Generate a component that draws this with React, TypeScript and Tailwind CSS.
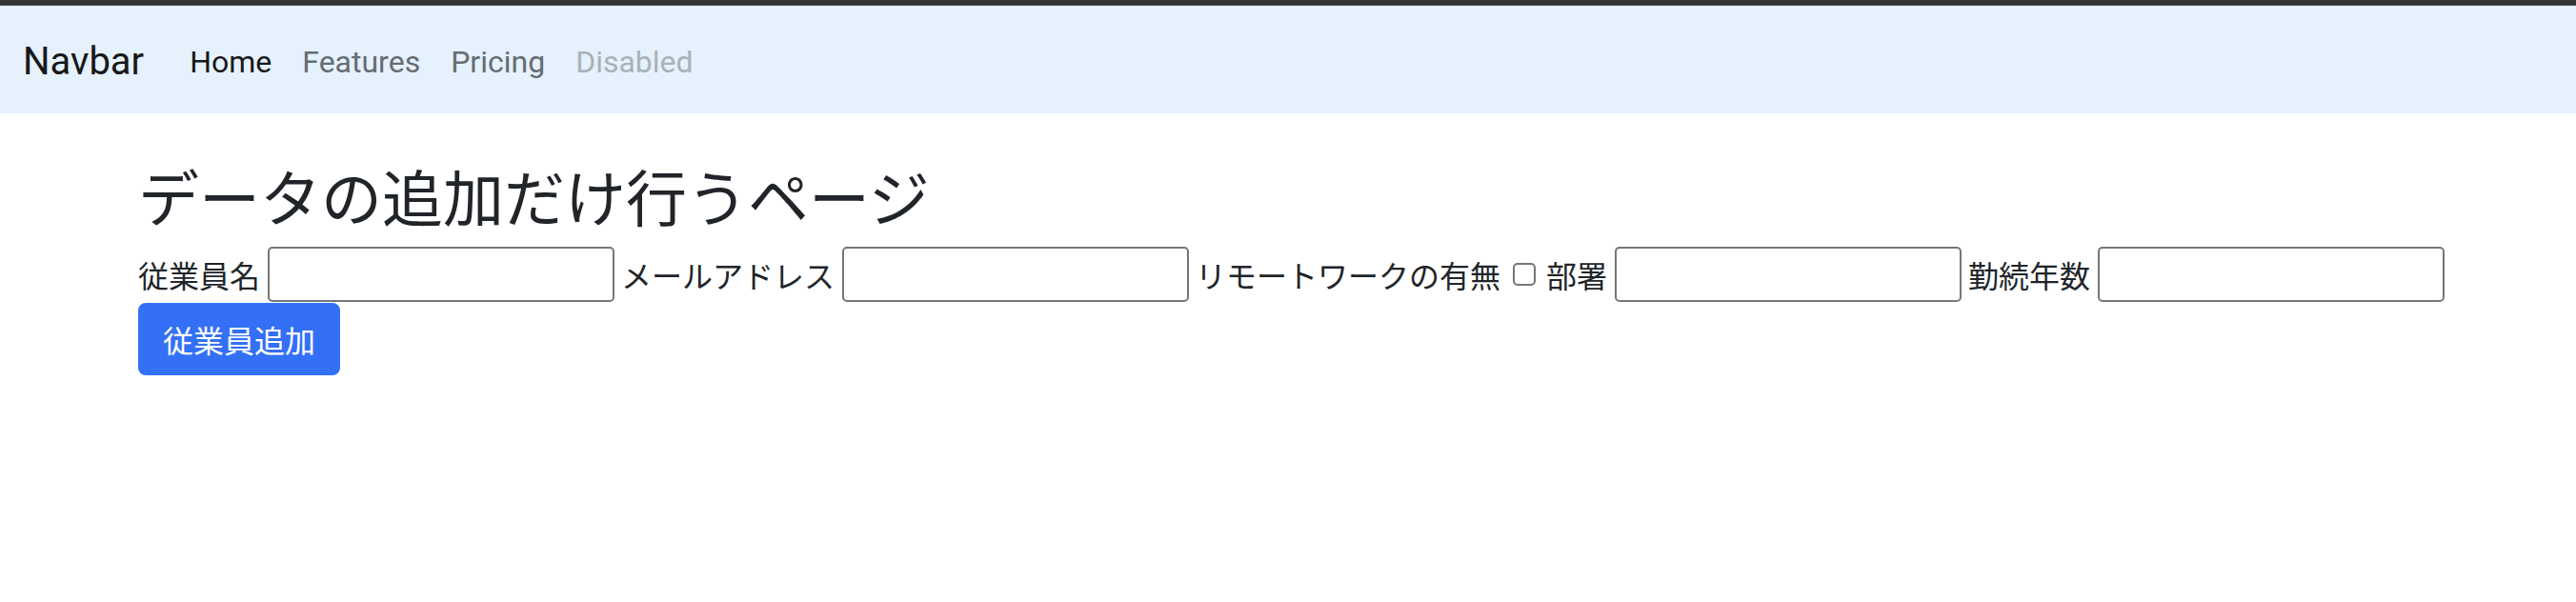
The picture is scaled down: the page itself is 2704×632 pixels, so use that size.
const navLinks = [
  { label: "Home", className: "text-[#17181a]" },
  { label: "Features", className: "text-[#666c72]" },
  { label: "Pricing", className: "text-[#666c72]" },
  { label: "Disabled", className: "text-[#a9b2ba]" },
];

const jp = "font-['Noto_Sans_CJK_JP',sans-serif]";

function TextInput() {
  return (
    <input
      type="text"
      className="w-[364px] h-[58px] shrink-0 rounded-[5px] border-2 border-[#767676] bg-white px-[4px] outline-none"
    />
  );
}

export default function App() {
  return (
    <div className="min-h-[632px] bg-white">
      {/* window strip */}
      <div className="h-[5px] bg-[#323337]" />
      <div className="h-px bg-[#4a4b4f]" />

      {/* Navbar */}
      <nav className="h-[113px] bg-[#e5f1fc] px-[24px] pt-[4px] flex items-center font-['Roboto',sans-serif]">
        <span className="text-[40px] leading-[60px] text-[#17181a] mr-[32px]">Navbar</span>
        <div className="flex items-center">
          {navLinks.map((link) => (
            <span key={link.label} className={`text-[32px] leading-[48px] px-[16px] ${link.className}`}>
              {link.label}
            </span>
          ))}
        </div>
      </nav>

      {/* Content */}
      <div className={`pl-[145px] pt-[47px] text-[#212529] ${jp}`}>
        <h1 className="text-[64px] leading-[77px] font-normal">データの追加だけ行うページ</h1>

        <div className="mt-[16px] flex items-center gap-[7.5px] text-[32px] leading-[48px]">
          <span>従業員名</span>
          <TextInput />
          <span>メールアドレス</span>
          <TextInput />
          <span>リモートワークの有無</span>
          <input
            type="checkbox"
            className="appearance-none w-[24px] h-[24px] ml-[5px] mr-[4px] shrink-0 rounded-[5px] border-2 border-[#767676] bg-white"
          />
          <span>部署</span>
          <TextInput />
          <span>勤続年数</span>
          <TextInput />
        </div>

        <button className="mt-px block rounded-[8px] border-2 border-[#3370f6] bg-[#3370f6] px-[24px] py-[12px] text-[32px] leading-[48px] text-white">
          従業員追加
        </button>
      </div>
    </div>
  );
}
